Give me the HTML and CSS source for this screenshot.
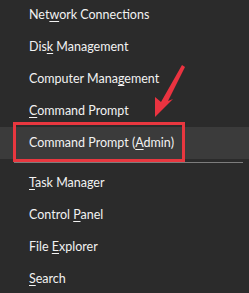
FILE: index.html
```html
<!DOCTYPE html>
<html lang="en">
<head>
<meta charset="UTF-8">
<meta name="viewport" content="width=device-width, initial-scale=1.0">
<title>Quick Link Menu</title>
<link rel="stylesheet" href="styles.css">
</head>
<body>
<div class="menu">
  <div class="item">Net<u>w</u>ork Connections</div>
  <div class="item">Dis<u>k</u> Management</div>
  <div class="item">Computer Mana<u>g</u>ement</div>
  <div class="item"><u>C</u>ommand Prompt</div>
  <div class="item active"><span class="mark"></span>Command Prompt (<u>A</u>dmin)</div>
  <div class="sep"></div>
  <div class="item"><u>T</u>ask Manager</div>
  <div class="item">Control <u>P</u>anel</div>
  <div class="item">File <u>E</u>xplorer</div>
  <div class="item"><u>S</u>earch</div>

  <!-- annotation arrow -->
  <svg class="arrow" width="249" height="293" viewBox="0 0 249 293">
    <path d="M182 65 L185 67 L168 101 L173 99 L155 117 L155 97 L161 102 Z" fill="#ea3340"/>
  </svg>
</div>
</body>
</html>
```

FILE: styles.css
```css
body { margin: 0; background: #2b2b2b; font-family: "Lato", "Noto Sans", sans-serif; color: #f2f2f2; overflow: hidden; }
.menu { position: relative; margin-top: -1px; }
.item { height: 32px; line-height: 32px; padding-left: 29px; font-size: 12.5px; position: relative; }
.item u { text-decoration-thickness: 1px; text-underline-offset: 2px; }
.item.active { background: #3b3b3b; }
.mark { position: absolute; left: 13px; top: -5px; width: 166px; height: 34px; border: 3px solid #e8373f; }
.sep { height: 1px; background: #7d7d7d; margin: 3px 6px 4px 14px; }
.arrow { position: absolute; left: 0; top: 1px; pointer-events: none; }
```
